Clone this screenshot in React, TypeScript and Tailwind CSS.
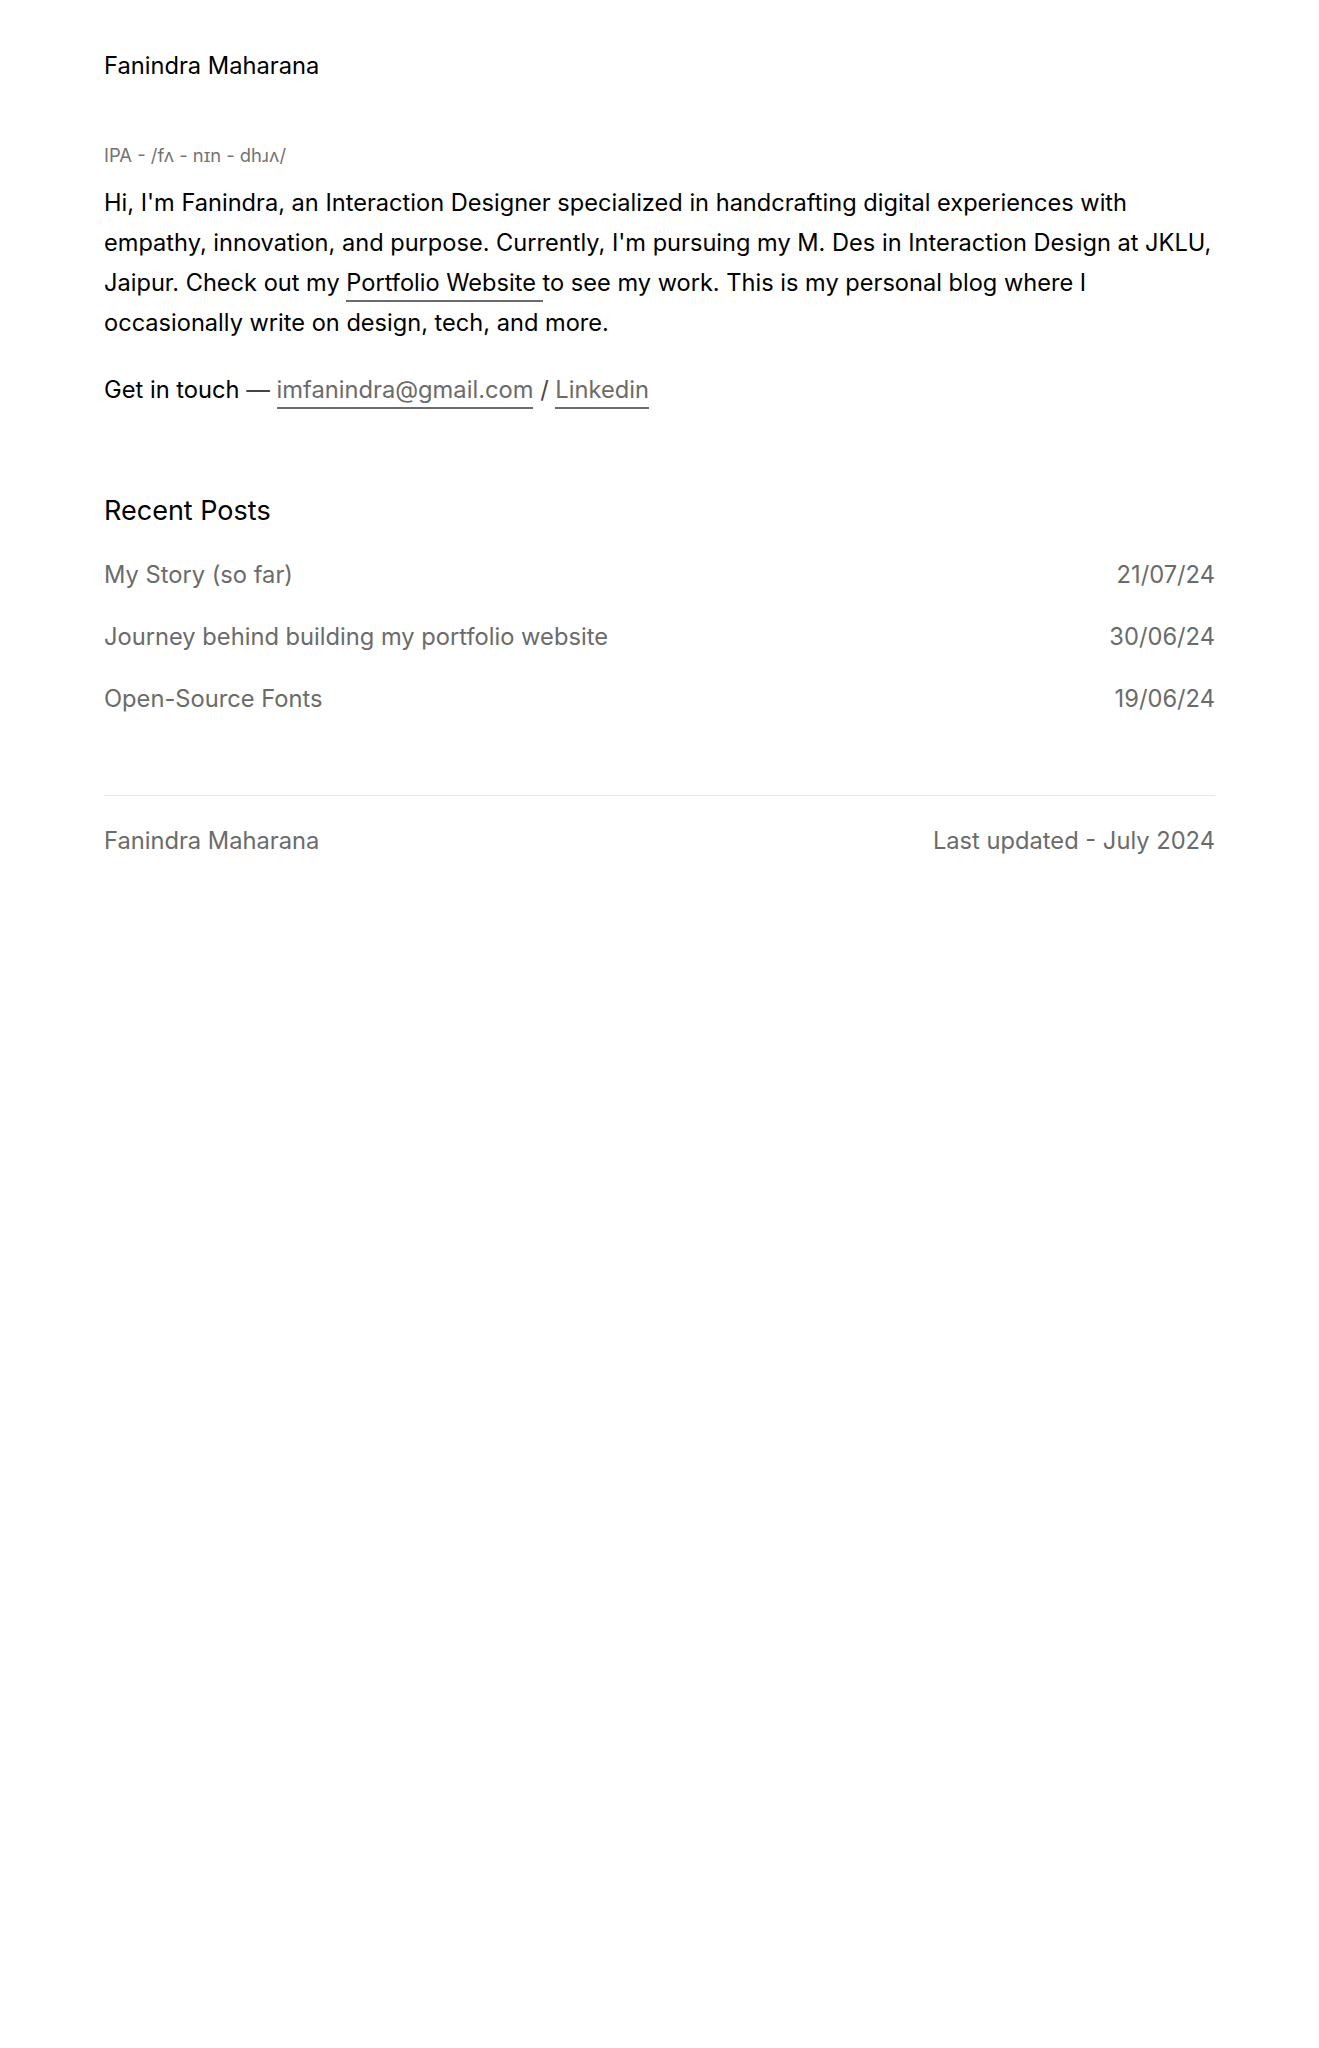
const posts = [
  { title: 'My Story (so far)', date: '21/07/24' },
  { title: 'Journey behind building my portfolio website', date: '30/06/24' },
  { title: 'Open-Source Fonts', date: '19/06/24' },
]

export default function App() {
  return (
    <div className="min-h-screen bg-white font-['Inter',sans-serif] text-[23.7px] leading-[40px] text-black">
      <div className="px-[104px] pt-[46px]">
        {/* Header */}
        <header>
          <a href="#" className="text-black">
            Fanindra Maharana
          </a>
        </header>

        {/* Intro */}
        <section className="mt-[55px]">
          <p className="text-[18.4px] leading-[28px] text-[#737373]">IPA - /fʌ - nɪn - dhɹʌ/</p>
          <p className="-mr-[6px] mt-[14px] text-[23.6px]">
            Hi, I'm Fanindra, an Interaction Designer specialized in handcrafting digital experiences with
            empathy, innovation, and purpose. Currently, I'm pursuing my M. Des in Interaction Design at JKLU,
            Jaipur. Check out my{' '}
            <a href="#" className="border-b-2 border-[#6b6b6b] pb-[3px]">
              Portfolio Website{' '}
            </a>
            to see my work. This is my personal blog where I occasionally write on design, tech, and more.
          </p>
          <p className="mt-[27px]">
            Get in touch <span className="text-[#444]">—</span>{' '}
            <a href="#" className="border-b-2 border-[#6b6b6b] pb-[3px] text-[#6b6b6b]">
              imfanindra@gmail.com
            </a>{' '}
            <span className="text-[#444]">/</span>{' '}
            <a href="#" className="border-b-2 border-[#6b6b6b] pb-[3px] text-[#6b6b6b]">
              Linkedin
            </a>
          </p>
        </section>

        {/* Recent posts */}
        <section className="mt-[81px] flex flex-col gap-[22px]">
          <h2 className="mb-[2px] text-[27px]">Recent Posts</h2>
          {posts.map((post) => (
            <a key={post.title} href="#" className="flex items-center justify-between text-[#6b6b6b]">
              <span>{post.title}</span>
              <span>{post.date}</span>
            </a>
          ))}
        </section>

        {/* Footer */}
        <footer className="mt-[76px] border-t border-[#e5e5e5] pt-[25px]">
          <div className="flex items-center justify-between text-[#6b6b6b]">
            <span>Fanindra Maharana</span>
            <span>Last updated - July 2024</span>
          </div>
        </footer>
      </div>
    </div>
  )
}
